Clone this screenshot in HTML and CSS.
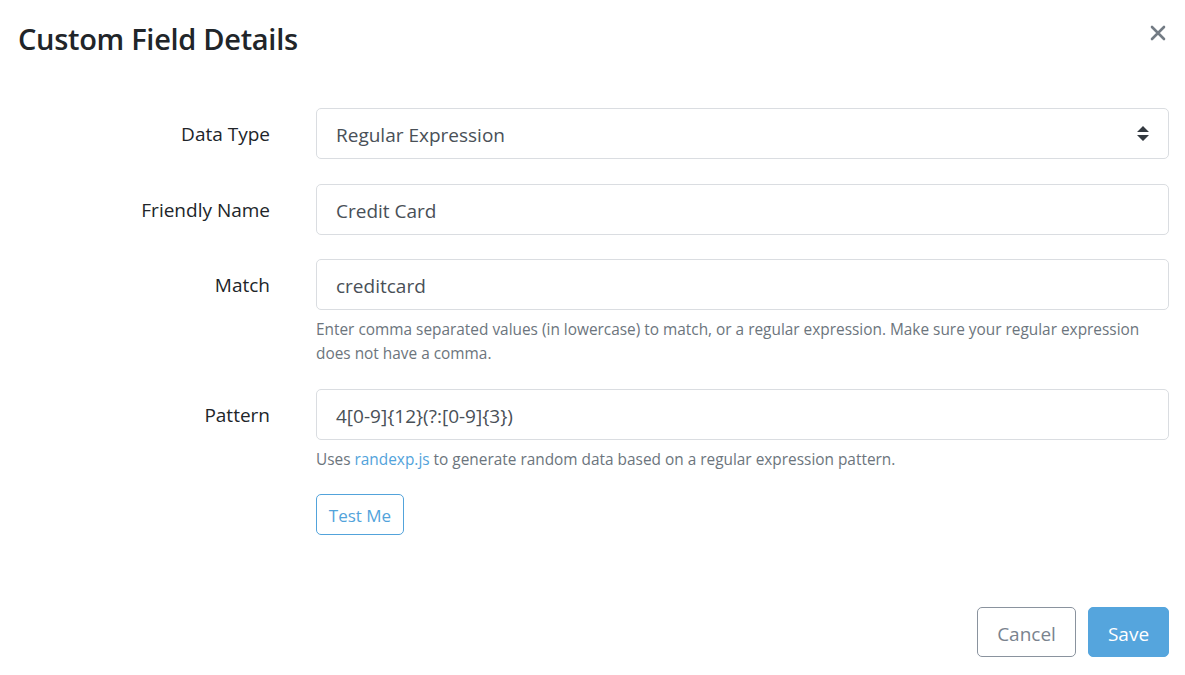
FILE: index.html
```html
<!DOCTYPE html>
<html lang="en">
<head>
  <meta charset="UTF-8">
  <title>Custom Field Details</title>
  <link rel="stylesheet" href="styles.css">
</head>
<body>

  <div class="modal">
    <div class="modal-header">
      <h3 class="modal-title">Custom Field Details</h3>
      <button class="close" type="button" aria-label="Close">
        <svg width="16" height="16" viewBox="0 0 16 16">
          <path d="M2 2 L14 14 M14 2 L2 14" stroke="currentColor" stroke-width="2.6" stroke-linecap="round"/>
        </svg>
      </button>
    </div>

    <form class="modal-body">
      <div class="form-row">
        <label class="col-label">Data Type</label>
        <div class="col-field">
          <div class="select-wrap">
            <div class="form-control">Regular Expression</div>
            <svg class="select-arrows" width="12" height="16" viewBox="0 0 12 16">
              <path d="M6 0 L12 6 L0 6 Z M0 9 L12 9 L6 15 Z" fill="#343a40"/>
            </svg>
          </div>
        </div>
      </div>

      <div class="form-row">
        <label class="col-label">Friendly Name</label>
        <div class="col-field">
          <div class="form-control">Credit Card</div>
        </div>
      </div>

      <div class="form-row">
        <label class="col-label">Match</label>
        <div class="col-field">
          <div class="form-control">creditcard</div>
          <p class="form-text">Enter comma separated values (in lowercase) to match, or a regular expression. Make sure your regular expression does not have a comma.</p>
        </div>
      </div>

      <div class="form-row">
        <label class="col-label">Pattern</label>
        <div class="col-field">
          <div class="form-control">4[0-9]{12}(?:[0-9]{3})</div>
          <p class="form-text">Uses <a href="#">randexp.js</a> to generate random data based on a regular expression pattern.</p>
          <button class="btn btn-outline" type="button">Test Me</button>
        </div>
      </div>
    </form>

    <div class="modal-footer">
      <button class="btn btn-cancel" type="button">Cancel</button>
      <button class="btn btn-save" type="button">Save</button>
    </div>
  </div>

</body>
</html>
```

FILE: styles.css
```css
body {
  margin: 0;
  font-family: "Open Sans", "Noto Sans", sans-serif;
  color: #212529;
  background: #fff;
}
.modal {
  width: 1185px;
}
.modal-header {
  display: flex;
  justify-content: space-between;
  align-items: flex-start;
  padding: 21px 19px 0 18px;
}
.modal-title {
  margin: 0;
  font-size: 29px;
  font-weight: 600;
  line-height: 35px;
  letter-spacing: -0.3px;
}
.close {
  border: 0;
  background: none;
  padding: 0;
  margin-top: 4px;
  color: #737b84;
  width: 16px;
  height: 16px;
  cursor: pointer;
}
.close svg {
  display: block;
}
.modal-body {
  padding: 52px 16px 0 16px;
}
.form-row {
  display: grid;
  grid-template-columns: 254px 1fr;
  column-gap: 46px;
  margin-bottom: 24px;
}
.form-row:first-child {
  margin-bottom: 25px;
}
.form-row:nth-child(3) {
  margin-bottom: 23px;
}
.col-label {
  text-align: right;
  font-size: 19px;
  line-height: 49px;
  padding-top: 2px;
  color: #212529;
}
.select-wrap {
  position: relative;
}
.select-arrows {
  position: absolute;
  right: 20px;
  top: 18px;
}
.form-control {
  box-sizing: border-box;
  height: 51px;
  border: 1px solid #dadde1;
  border-radius: 5px;
  padding: 2px 19px 0 19px;
  font-size: 19px;
  line-height: 49px;
  color: #495057;
  overflow: hidden;
}
.form-text {
  margin: 8px 0 0 0;
  font-size: 15.4px;
  line-height: 24px;
  color: #6c757d;
}
.form-text a {
  color: #52a3db;
  text-decoration: none;
}
.btn {
  box-sizing: border-box;
  font-family: inherit;
  background: #fff;
  border-radius: 5px;
  cursor: pointer;
}
.btn-outline {
  margin-top: 22px;
  height: 41px;
  width: 88px;
  padding: 1px 0 0 0;
  border: 1px solid #52a3db;
  color: #52a3db;
  font-size: 17px;
}
.modal-footer {
  display: flex;
  justify-content: flex-end;
  gap: 12px;
  padding: 48px 16px 0 16px;
}
.btn-cancel {
  height: 50px;
  width: 99px;
  padding: 3px 0 0 0;
  border: 1px solid #8a939e;
  color: #7a838e;
  font-size: 19px;
}
.btn-save {
  height: 50px;
  width: 81px;
  padding: 3px 0 0 0;
  border: 1px solid #55a5dd;
  background: #55a5dd;
  color: #fff;
  font-size: 19px;
}
```
